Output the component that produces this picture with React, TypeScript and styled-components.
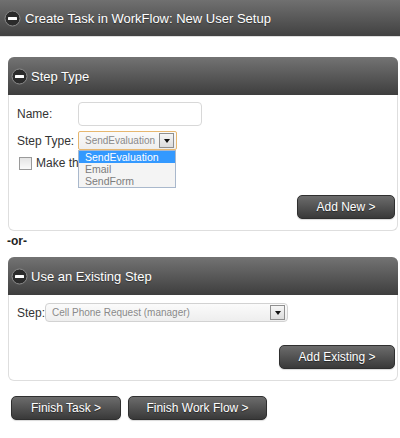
import React from "react";
import styled, { createGlobalStyle } from "styled-components";

const GlobalStyle = createGlobalStyle`
  html, body {
    margin: 0;
    padding: 0;
    background: #ffffff;
    font-family: "Liberation Sans", Arial, sans-serif;
  }
`;

const Page = styled.div`
  width: 400px;
  height: 438px;
  overflow: hidden;
  background: #fff;
`;

const TopBar = styled.div`
  height: 36px;
  display: flex;
  align-items: center;
  gap: 4px;
  padding-left: 4px;
  background: linear-gradient(#707070, #414141);
  border-bottom: 1px solid #dcdcdc;
  color: #fff;
  font-size: 13px;
  text-shadow: 0 1px 1px rgba(0, 0, 0, 0.4);
`;

const Content = styled.div`
  padding: 20px 2px 0 8px;
`;

const Panel = styled.div`
  border: 1px solid #dedede;
  border-top: none;
  border-radius: 6px;
`;

const PanelHeader = styled.div`
  height: 38px;
  display: flex;
  align-items: center;
  gap: 3px;
  padding-left: 3px;
  margin: 0 -1px;
  border-radius: 6px 6px 0 0;
  background: linear-gradient(#737373, #3e3e3e);
  color: #fff;
  font-size: 13px;
  text-shadow: 0 1px 1px rgba(0, 0, 0, 0.4);
`;

const PanelBody = styled.div<{ $top: number }>`
  padding: ${({ $top }) => $top}px 2px 11px 8px;
  display: flex;
  flex-direction: column;
`;

const Row = styled.div<{ $gap: number }>`
  display: flex;
  align-items: center;
  margin-bottom: ${({ $gap }) => $gap}px;
  font-size: 12px;
  color: #333;
`;

const Label = styled.span<{ $width: number }>`
  width: ${({ $width }) => $width}px;
  flex: none;
`;

const CheckText = styled.span`
  white-space: nowrap;
`;

const TextInput = styled.div`
  width: 122px;
  height: 22px;
  border: 1px solid #d8d8d8;
  border-radius: 4px;
  background: #fff;
`;

const SelectWrap = styled.div`
  position: relative;
`;

const Select = styled.div<{ $width: number; $focus?: boolean }>`
  width: ${({ $width }) => $width}px;
  height: 17px;
  display: flex;
  align-items: center;
  justify-content: space-between;
  padding: 0 2px 0 6px;
  box-sizing: content-box;
  border: 1px solid ${({ $focus }) => ($focus ? "#e6b770" : "#d2d2d2")};
  border-radius: ${({ $focus }) => ($focus ? "2px" : "4px")};
  background: linear-gradient(#fbfbfb, #eeeeee);
  color: #8a8a8a;
  font-size: 10px;
  white-space: nowrap;
`;

const ArrowBox = styled.span`
  width: 13px;
  height: 13px;
  flex: none;
  display: flex;
  align-items: center;
  justify-content: center;
  border: 1px solid #8f8f8f;
  background: linear-gradient(#f6f6f6, #dcdcdc);
  &::after {
    content: "";
    border-left: 3px solid transparent;
    border-right: 3px solid transparent;
    border-top: 4px solid #111;
    margin-top: 1px;
  }
`;

const DropList = styled.div`
  position: absolute;
  top: 100%;
  left: 0;
  width: 96px;
  border: 1px solid #a9b8cc;
  background: #f4f4f4;
  z-index: 2;
`;

const DropItem = styled.div<{ $active?: boolean }>`
  height: 12px;
  line-height: 12px;
  padding-left: 6px;
  font-size: 10.5px;
  color: ${({ $active }) => ($active ? "#fff" : "#7c7c7c")};
  background: ${({ $active }) => ($active ? "#3399ff" : "transparent")};
`;

const Checkbox = styled.span`
  width: 11px;
  height: 11px;
  margin: 0 4px 0 2px;
  border: 1px solid #9a9a9a;
  background: linear-gradient(#e4e4e4, #fafafa);
  flex: none;
`;

const ButtonRow = styled.div<{ $top: number }>`
  display: flex;
  justify-content: flex-end;
  margin-top: ${({ $top }) => $top}px;
`;

const Button = styled.button<{ $width: number }>`
  width: ${({ $width }) => $width}px;
  height: 24px;
  padding: 0;
  border: 1px solid #2f2f2f;
  border-radius: 5px;
  background: linear-gradient(#6c6c6c, #393939);
  color: #fff;
  font-family: "Liberation Sans", Arial, sans-serif;
  font-size: 12px;
  text-shadow: 0 1px 1px rgba(0, 0, 0, 0.5);
  box-shadow: 0 1px 1px rgba(0, 0, 0, 0.15);
  cursor: pointer;
`;

const OrText = styled.div`
  height: 26px;
  margin-left: -1px;
  padding-top: 2px;
  box-sizing: border-box;
  font-size: 12px;
  font-weight: bold;
  color: #222;
  line-height: 16px;
`;

const Footer = styled.div`
  display: flex;
  gap: 7px;
  padding: 15px 0 0 3px;
`;

const MinusIcon = () => (
  <svg width="17" height="17" viewBox="0 0 17 17">
    <circle cx="8.5" cy="8.5" r="7.5" fill="#2b2b2b" stroke="#8a8a8a" strokeWidth="1" />
    <rect x="4" y="7" width="9" height="3" rx="0.5" fill="#fff" />
  </svg>
);

export default function App() {
  return (
    <Page>
      <GlobalStyle />
      <TopBar>
        <MinusIcon />
        <span>Create Task in WorkFlow: New User Setup</span>
      </TopBar>
      <Content>
        <Panel>
          <PanelHeader>
            <MinusIcon />
            <span>Step Type</span>
          </PanelHeader>
          <PanelBody $top={7}>
            <Row $gap={5}>
              <Label $width={61}>Name:</Label>
              <TextInput />
            </Row>
            <Row $gap={6}>
              <Label $width={61}>Step Type:</Label>
              <SelectWrap>
                <Select $width={89} $focus>
                  <span>SendEvaluation</span>
                  <ArrowBox />
                </Select>
                <DropList>
                  <DropItem $active>SendEvaluation</DropItem>
                  <DropItem>Email</DropItem>
                  <DropItem>SendForm</DropItem>
                </DropList>
              </SelectWrap>
            </Row>
            <Row $gap={0}>
              <Checkbox />
              <CheckText>Make this</CheckText>
            </Row>
            <ButtonRow $top={25}>
              <Button $width={98}>Add New &gt;</Button>
            </ButtonRow>
          </PanelBody>
        </Panel>
        <OrText>-or-</OrText>
        <Panel>
          <PanelHeader>
            <MinusIcon />
            <span>Use an Existing Step</span>
          </PanelHeader>
          <PanelBody $top={8}>
            <Row $gap={0}>
              <Label $width={28}>Step:</Label>
              <Select $width={233}>
                <span>Cell Phone Request (manager)</span>
                <ArrowBox />
              </Select>
            </Row>
            <ButtonRow $top={23}>
              <Button $width={116}>Add Existing &gt;</Button>
            </ButtonRow>
          </PanelBody>
        </Panel>
        <Footer>
          <Button $width={110}>Finish Task &gt;</Button>
          <Button $width={139}>Finish Work Flow &gt;</Button>
        </Footer>
      </Content>
    </Page>
  );
}
